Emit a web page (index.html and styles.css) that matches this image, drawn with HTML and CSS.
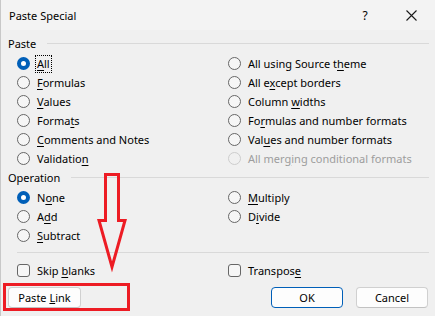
FILE: index.html
```html
<!DOCTYPE html>
<html>
<head>
<meta charset="utf-8">
<link rel="stylesheet" href="styles.css">
</head>
<body>
<div class="dialog">
  <div class="titlebar">
    <span class="title">Paste Special</span>
    <span class="help">?</span>
    <span class="close"><svg width="11" height="11" viewBox="0 0 11 11"><path d="M0.5 0.5 L10.5 10.5 M10.5 0.5 L0.5 10.5" stroke="#1a1a1a" stroke-width="1.1" fill="none"/></svg></span>
  </div>
  <div class="body">
    <div class="group-head"><span>Paste</span><span class="rule"></span></div>
    <div class="options">
      <div class="opt"><span class="radio on"></span><span class="lbl focus"><u>A</u>ll</span></div>
      <div class="opt"><span class="radio"></span><span class="lbl">All using Source t<u>h</u>eme</span></div>
      <div class="opt"><span class="radio"></span><span class="lbl"><u>F</u>ormulas</span></div>
      <div class="opt"><span class="radio"></span><span class="lbl">All e<u>x</u>cept borders</span></div>
      <div class="opt"><span class="radio"></span><span class="lbl"><u>V</u>alues</span></div>
      <div class="opt"><span class="radio"></span><span class="lbl">Column <u>w</u>idths</span></div>
      <div class="opt"><span class="radio"></span><span class="lbl">Forma<u>t</u>s</span></div>
      <div class="opt"><span class="radio"></span><span class="lbl">Fo<u>r</u>mulas and number formats</span></div>
      <div class="opt"><span class="radio"></span><span class="lbl"><u>C</u>omments and Notes</span></div>
      <div class="opt"><span class="radio"></span><span class="lbl">Val<u>u</u>es and number formats</span></div>
      <div class="opt"><span class="radio"></span><span class="lbl">Validatio<u>n</u></span></div>
      <div class="opt disabled"><span class="radio"></span><span class="lbl">All mer<u>g</u>ing conditional formats</span></div>
    </div>
    <div class="group-head op-head"><span>Operation</span><span class="rule"></span></div>
    <div class="options">
      <div class="opt"><span class="radio on"></span><span class="lbl">N<u>o</u>ne</span></div>
      <div class="opt"><span class="radio"></span><span class="lbl"><u>M</u>ultiply</span></div>
      <div class="opt"><span class="radio"></span><span class="lbl">A<u>d</u>d</span></div>
      <div class="opt"><span class="radio"></span><span class="lbl">D<u>i</u>vide</span></div>
      <div class="opt"><span class="radio"></span><span class="lbl"><u>S</u>ubtract</span></div>
      <div class="opt"></div>
    </div>
    <div class="separator"></div>
    <div class="options checks">
      <div class="opt"><span class="check"></span><span class="lbl">Skip <u>b</u>lanks</span></div>
      <div class="opt"><span class="check"></span><span class="lbl">Transpos<u>e</u></span></div>
    </div>
    <div class="buttons">
      <button class="btn">Paste <u>L</u>ink</button>
      <span class="spacer"></span>
      <button class="btn primary">OK</button>
      <button class="btn">Cancel</button>
    </div>
  </div>
  <svg class="arrow" width="435" height="316" viewBox="0 0 435 316">
    <polygon points="104.5,174.5 117.5,174.5 117.5,220.5 124,220.5 111,267 98,220.5 104.5,220.5" fill="none" stroke="#ed1c24" stroke-width="3"/>
  </svg>
  <div class="highlight"></div>
</div>
</body>
</html>
```

FILE: styles.css
```css
html, body {
  margin: 0;
  padding: 0;
  background: #f0f0f0;
}
.dialog {
  position: relative;
  width: 435px;
  height: 316px;
  overflow: hidden;
  font-family: "Noto Sans", "Open Sans", sans-serif;
  font-size: 11px;
  color: #000;
  background: #f0f0f0;
  box-sizing: border-box;
  border-left: 1px solid #c8c8c8;
}
.titlebar {
  height: 30px;
  display: flex;
  align-items: center;
  background: #f3f3f3;
  padding-left: 8px;
}
.title {
  flex: 1;
  font-size: 11px;
}
.help {
  width: 12px;
  margin-right: 35px;
  font-size: 12px;
  text-align: center;
}
.close {
  width: 11px;
  height: 11px;
  margin-right: 18px;
  display: flex;
}
.body {
  padding: 5px 6px 0 7px;
}
.group-head {
  height: 16px;
  display: flex;
  align-items: center;
  gap: 11px;
}
.rule {
  flex: 1;
  height: 1px;
  background: #d9d9d9;
}
.options {
  display: grid;
  grid-template-columns: 211px 1fr;
  margin: 3px 0 0 9px;
}
.op-head {
  margin-top: 1px;
}
.opt {
  height: 19px;
  display: flex;
  align-items: center;
  gap: 6px;
}
.lbl {
  line-height: 16px;
  white-space: nowrap;
  padding: 0 1px;
}
.lbl u {
  text-underline-offset: 2px;
}
.focus {
  outline: 1px dotted #000;
  outline-offset: 0;
}
.radio {
  width: 13px;
  height: 13px;
  box-sizing: border-box;
  border: 1px solid #666;
  border-radius: 50%;
  background: #f6f6f6;
  flex: none;
}
.radio.on {
  border: 4px solid #005fb8;
  background: #fff;
}
.disabled .radio {
  border-color: #cdcdcd;
  background: #f0f0f0;
}
.disabled .lbl {
  color: #9d9d9d;
}
.separator {
  height: 1px;
  background: #d9d9d9;
  margin: 7px 0 0 9px;
}
.checks {
  margin-top: 8px;
}
.check {
  width: 13px;
  height: 13px;
  box-sizing: border-box;
  border: 1px solid #666;
  border-radius: 3px;
  background: #f6f6f6;
  flex: none;
}
.buttons {
  display: flex;
  margin-top: 7px;
  gap: 13px;
  padding-right: 1px;
}
.spacer {
  flex: 1;
}
.btn {
  width: 72px;
  height: 21px;
  box-sizing: border-box;
  border: 1px solid #d0d0d0;
  border-bottom-color: #c2c2c2;
  border-radius: 4px;
  background: #fdfdfd;
  font-family: inherit;
  font-size: 11px;
  color: #000;
  padding: 0;
  line-height: 18px;
}
.btn:first-child {
  width: 73px;
}
.btn.primary {
  border-color: #005fb8;
}
.arrow {
  position: absolute;
  left: 0;
  top: 0;
  pointer-events: none;
}
.highlight {
  position: absolute;
  left: 2px;
  top: 283px;
  width: 127px;
  height: 28px;
  box-sizing: border-box;
  border: 3px solid #ed1c24;
}
```
